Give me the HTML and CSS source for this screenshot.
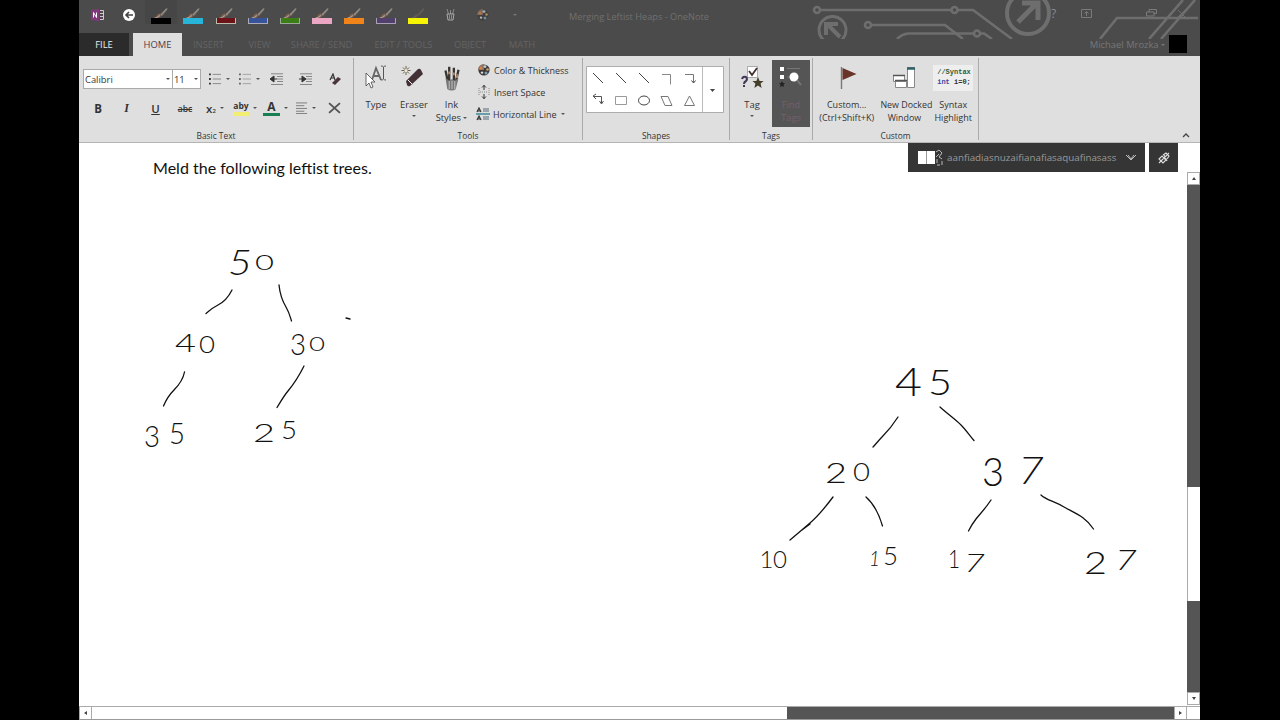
FILE: index.html
```html
<!DOCTYPE html>
<html lang="en">
<head>
<meta charset="UTF-8">
<title>Merging Leftist Heaps - OneNote</title>
<link rel="stylesheet" href="styles.css">
</head>
<body>
<svg class="defs" width="0" height="0">
  <symbol id="brush" viewBox="0 0 18 12">
    <path d="M15 0 L8 7 L10 9 L16 2Z" fill="#77736f"/>
    <path d="M15.5 .5 L9 7.5" stroke="#a39a92" fill="none"/>
    <path d="M8 6 Q5 6 4 9 Q3 11 1 11 Q7 12 9 9Z" fill="#8b6450"/>
    <path d="M2 11 Q5 11 8 8" stroke="#bbb" fill="none" stroke-width=".8"/>
  </symbol>
  <symbol id="cup" viewBox="0 0 20 28">
    <path d="M3 6l3 14M7 2v16M12 3v16M17 5l-3 14" stroke="#383532" stroke-width="2.5" fill="none"/>
    <path d="M7 7v3M12 8v3M16 10l-1 4" stroke="#b08a6c" stroke-width="2"/>
    <path d="M3 14l2 12q5 3 9 0l3-12-4 3-3-2-3 2z" fill="#777"/>
    <path d="M7 17v9M10 17v9M13 17v9" stroke="#ddd" stroke-width=".8"/>
  </symbol>
  <symbol id="palette" viewBox="0 0 12 12">
    <circle cx="6" cy="6" r="5.6" fill="#3d3937"/>
    <path d="M6 0v6H0a6 6 0 0 1 6-6z" fill="#8b7167"/>
    <circle cx="3" cy="4" r="1.5" fill="#d9853b"/><circle cx="7" cy="2.6" r="1.4" fill="#c2cfd4"/>
    <circle cx="9.5" cy="5.5" r="1.3" fill="#cda069"/><circle cx="8" cy="9" r="1.5" fill="#79a4bc"/>
    <circle cx="4" cy="8.6" r="1.2" fill="#ddd"/>
  </symbol>
  <symbol id="bullets" viewBox="0 0 13 13">
    <path d="M0 1.5h2M0 6.5h2M0 11.5h2" stroke="#333" stroke-width="2"/>
    <path d="M4 1.5h9M4 6.5h9M4 11.5h9" stroke="#858585"/>
  </symbol>
  <symbol id="lines" viewBox="0 0 13 13">
    <path d="M0 1h12M0 4h9M0 7h12M0 10h9M0 12.5h12" stroke="#777"/>
  </symbol>
  <symbol id="outdent" viewBox="0 0 13 13">
    <path d="M1 .8h12M7 3.5h6M7 6h6M7 8.5h6M1 11.5h12" stroke="#888"/>
    <path d="M4 3v6L0 6zM4 6h3" fill="#333" stroke="#333"/>
  </symbol>
  <symbol id="indent" viewBox="0 0 13 13">
    <path d="M1 .8h12M7 3.5h6M7 6h6M7 8.5h6M1 11.5h12" stroke="#888"/>
    <path d="M3 3v6l4-3zM0 6h3" fill="#333" stroke="#333"/>
  </symbol>
</svg>

<div class="app">
  <header class="titlebar">
    <svg class="circuit" viewBox="812 0 388 39" width="388" height="39">
      <g fill="none" stroke="#6e6e6e" stroke-width="2.6">
        <circle cx="817" cy="10" r="3"/><path d="M820 10h131"/>
        <circle cx="954.500" cy="10" r="3"/><path d="M958 10h15l39 29"/>
        <circle cx="868" cy="25" r="3"/><path d="M871 25h74l18 14"/>
        <path d="M897 39q5-5 11-5.500h66"/><circle cx="977" cy="33.500" r="3"/><path d="M980 33.500h4l8 5.500"/>
        <path d="M1100 39l17-21h81M1149 39l34-39M1161 39l34-39"/>
        <circle cx="832.500" cy="30" r="13.500" stroke-width="3"/>
        <path d="M840 37l-12-12M826 35v-11h12" stroke-width="4"/>
        <circle cx="1028" cy="13" r="21" stroke-width="4"/>
        <path d="M1018 22l18-18M1022 3h16v17" stroke-width="5"/>
      </g>
    </svg>
    <div class="quick">
      <span><svg width="13" height="12" viewBox="0 0 13 12"><path fill="#80397b" d="M0 1l8-1v12l-8-1z"/><path d="M9 1.500h3.500v9H9M9 4.500h3M9 7.500h3" fill="none" stroke="#d8c3d6"/><path d="M2.500 8.500v-5l3 5v-5" fill="none" stroke="#fff"/></svg></span>
      <span><svg width="12" height="12" viewBox="0 0 12 12"><circle cx="6" cy="6" r="6" fill="#fff"/><path d="M10 6H3M6 3L3 6l3 3" fill="none" stroke="#444" stroke-width="1.600"/></svg></span>
      <span class="pen black on"><svg width="18" height="11"><use href="#brush"/></svg></span>
      <span class="pen cyan"><svg width="18" height="11"><use href="#brush"/></svg></span>
      <span class="pen red"><svg width="18" height="11"><use href="#brush"/></svg></span>
      <span class="pen blue"><svg width="18" height="11"><use href="#brush"/></svg></span>
      <span class="pen green"><svg width="18" height="11"><use href="#brush"/></svg></span>
      <span class="pen pink"><svg width="18" height="11"><use href="#brush"/></svg></span>
      <span class="pen orange"><svg width="18" height="11"><use href="#brush"/></svg></span>
      <span class="pen purple"><svg width="18" height="11"><use href="#brush"/></svg></span>
      <span class="pen yellow"><svg width="18" height="11" opacity=".3"><use href="#brush"/></svg></span>
      <span><svg width="11" height="13" viewBox="0 0 11 13"><path d="M2 1l1.500 5M5.500 2v4M9 1L7.500 6" stroke="#8a8a8a" fill="none"/><path d="M2 6h7l-1 6H3z" fill="none" stroke="#aaa"/><path d="M4.500 7v4M6.500 7v4" stroke="#888"/></svg></span>
      <span class="dim"><svg width="12" height="12"><use href="#palette"/></svg></span>
      <span><i class="caret faint"></i></span>
    </div>
    <div class="title">Merging Leftist Heaps - OneNote</div>
    <div class="winbtns">
      <span>?</span>
      <svg class="opts" width="11" height="9" viewBox="0 0 11 9"><path d="M.5.500h10v8H.500zM5.500 7V3M3.500 4.500l2-2 2 2" fill="none" stroke="#7a7a7a"/></svg>
      <svg class="restore" width="11" height="9" viewBox="0 0 11 9"><path d="M3 3V.500h7.500v4H8M.500 3H8v4H.500z" fill="none" stroke="#7a7a7a"/></svg>
      <svg width="9" height="9" viewBox="0 0 9 9"><path d="M1 1l7 7M8 1L1 8" stroke="#707070"/></svg>
    </div>
  </header>

  <nav class="tabs">
    <span class="file">FILE</span>
    <span class="home">HOME</span>
    <span class="t-insert">INSERT</span>
    <span class="t-view">VIEW</span>
    <span class="t-share">SHARE / SEND</span>
    <span class="t-edit">EDIT / TOOLS</span>
    <span class="t-object">OBJECT</span>
    <span class="t-math">MATH</span>
    <span class="user">Michael Mrozka <i class="caret"></i></span>
    <span class="avatar"></span>
  </nav>

  <section class="ribbon">
    <div class="group basic">
      <div class="body">
        <div class="fontrow">
          <span class="box face">Calibri<i class="caret"></i></span>
          <span class="box size">11<i class="caret"></i></span>
          <span class="tool b1"><svg width="12" height="12"><use href="#bullets"/></svg><i class="caret"></i></span>
          <span class="tool b2"><svg width="12" height="12" opacity=".7"><use href="#bullets"/></svg><i class="caret"></i></span>
          <span class="tool b3"><svg width="13" height="13"><use href="#outdent"/></svg></span>
          <span class="tool b4"><svg width="13" height="13"><use href="#indent"/></svg></span>
          <span class="tool b5"><svg width="12" height="12" viewBox="0 0 12 12"><path d="M1 7l3-6 2 6M2 5h3" stroke="#333" fill="none" stroke-width="1.200"/><path d="M3 10l6-6 3 2-6 6z" fill="#49343a"/></svg></span>
        </div>
        <div class="stylerow">
          <span class="bold">B</span>
          <span class="ital">I</span>
          <span class="undl">U</span>
          <span class="strk">abc</span>
          <span class="sub">x<sub>2</sub><i class="caret"></i></span>
          <span class="hl"><b>aby</b><i class="caret"></i></span>
          <span class="fc"><b>A</b><i class="caret"></i></span>
          <span><svg width="12" height="12"><use href="#lines"/></svg><i class="caret"></i></span>
          <span class="del"><svg width="13" height="12" viewBox="0 0 12 11"><path d="M1 1l10 9M11 1L1 10" stroke="#555" stroke-width="1.800"/></svg></span>
        </div>
      </div>
      <div class="label">Basic Text</div>
    </div>

    <div class="group tools">
      <div class="body">
        <div class="big type">
          <svg width="24" height="26" viewBox="0 0 24 26"><path d="M8 15l4-12 5 12M9.500 11h6" fill="none" stroke="#666" stroke-width="1.800"/><path d="M17 1q2 0 2.500 1Q20 1 22 1M19.500 2v12M17 15q2 0 2.500-1 .5 1 2.500 1" fill="none" stroke="#555"/><path d="M2 8v13l3-3 2 5 2-1-2-5h4z" fill="#fff" stroke="#444" stroke-width=".8"/></svg>
          Type
        </div>
        <div class="big eraser">
          <svg width="28" height="26" viewBox="0 0 28 26"><path d="M6 1v9M1.500 5.500h9M3 2.500l6 6M9 2.500l-6 6" stroke="#6b6250"/><circle cx="6" cy="5.500" r="1.500" fill="#f3efdc"/><path d="M6 16L18 4q2-1 3 1l2 4-13 12q-2 1-3-1z" fill="#433136"/><path d="M8 15l4 4" stroke="#eee"/></svg>
          <span>Eraser</span><i class="caret"></i>
        </div>
        <div class="big ink">
          <svg width="20" height="26"><use href="#cup"/></svg>
          Ink<br>Styles <i class="caret"></i>
        </div>
        <div class="list">
          <div><svg width="12" height="12"><use href="#palette"/></svg>Color &amp; Thickness</div>
          <div><svg width="12" height="14" viewBox="0 0 12 14"><path d="M6 0v5M4 2.500L6 .500l2 2M6 14V9M4 11.500l2 2 2-2" fill="none" stroke="#333"/><path d="M1 3v8M11 3v8M2 7h8" stroke="#888" stroke-dasharray="1 1"/></svg>Insert Space</div>
          <div class="hline"><svg width="14" height="14" viewBox="0 0 14 14"><path d="M1 5l2-4 2 4M1.500 4h3M1 13l2-4 2 4M1.500 12h3" fill="none" stroke="#333" stroke-width="1.200"/><path d="M0 7h14" stroke="#1f7a8c" stroke-width="1.300"/><path d="M7 2h6M7 4h6M7 10h6M7 12h6" stroke="#5a6a78"/></svg>Horizontal Line <i class="caret"></i></div>
        </div>
      </div>
      <div class="label">Tools</div>
    </div>

    <div class="group shapes">
      <div class="body">
        <svg width="138" height="47" viewBox="0 0 138 47">
          <path d="M.5.500h137v46H.500z" fill="#fff" stroke="#adadad"/><path d="M116.500 1v45" stroke="#bbb"/>
          <g fill="none" stroke="#444">
            <path d="M7 7l10 10M30 7l10 10M53 7l10 10"/>
            <path d="M76 8.500h8.500v10" stroke="#888"/><path d="M99 8.500h8.500v8" stroke="#777"/><path d="M105.500 14.500l2 2.500 2-2.500"/>
            <path d="M10 28l-3 2 3 3M7 30.500h8.500v7M13.500 35l2 3 2-3" stroke="#555"/>
            <path d="M29.500 30.500h11v8h-11z" stroke="#999"/><ellipse cx="58" cy="34.500" rx="5.500" ry="4.500"/>
            <path d="M75 30.500h7l4 9h-7z" stroke="#777"/><path d="M103.500 30l5 9.500h-10z" stroke="#777"/>
          </g>
          <path d="M124 23h5l-2.500 3z" fill="#444"/>
        </svg>
      </div>
      <div class="label">Shapes</div>
    </div>

    <div class="group tags">
      <div class="body">
        <div class="big tag">
          <svg width="24" height="26" viewBox="0 0 24 26"><path d="M7.500 1.500h10v11h-10z" fill="#fff" stroke="#aaa"/><path d="M9 6l3 4 5-7" fill="none" stroke="#442c2c" stroke-width="1.800"/><path d="M2 14q1-3 4-2 2 2 0 4-2 1-2 3M4 20v2" fill="none" stroke="#46375a" stroke-width="2"/><path d="M18 12l1.600 4h4l-3 2.600 1 4.400-3.600-2.500L14.400 23l1-4.400-3-2.600h4z" fill="#443f28"/></svg>
          Tag<i class="caret"></i>
        </div>
        <div class="big find">
          <svg width="28" height="26" viewBox="0 0 28 26"><path d="M3 2h4v4H3zM3 10h4v4H3z" fill="#fff"/><path d="M10 3.500h13M10 12h5" stroke="#777"/><path d="M5 16l1 2h2l-1.500 1.500.5 2.500-2-1-2 1 .5-2.500L2 18h2z" fill="#222"/><circle cx="17" cy="12" r="4.500" fill="#fff"/><path d="M20 15l4 5" stroke="#777" stroke-width="2"/></svg>
          Find<br>Tags
        </div>
      </div>
      <div class="label">Tags</div>
    </div>

    <div class="group custom">
      <div class="body">
        <div class="big c1">
          <svg width="24" height="26" viewBox="0 0 24 26"><path d="M6.500 2v22" stroke="#777" stroke-width="1.400"/><path d="M7.500 3l14 6-14 6z" fill="#6a3329"/></svg>
          Custom...<br>(Ctrl+Shift+K)
        </div>
        <div class="big c2">
          <svg width="24" height="26" viewBox="0 0 24 26"><path d="M1.500 10.500h11v6h-11zM3.500 16.500h11v6h-11z" fill="#fff" stroke="#888"/><path d="M1 10.500h12M3 15.500h12" stroke="#555" stroke-width="1.500"/><path d="M15.500 2.500h7v20h-7z" fill="#fff" stroke="#888"/><path d="M15 3.500h8" stroke="#2f6268" stroke-width="2.500"/></svg>
          New Docked<br>Window
        </div>
        <div class="big c3">
          <div class="code"><em>//Syntax</em><br><b>int</b> i=0;</div>
          Syntax<br>Highlight
        </div>
      </div>
      <div class="label">Custom</div>
    </div>
    <svg class="collapse" width="8" height="5" viewBox="0 0 8 5"><path d="M1 4l3-3 3 3" fill="none" stroke="#444" stroke-width="1.300"/></svg>
  </section>

  <main class="page">
    <div class="sheet">
      <p class="note">Meld the following leftist trees.</p>
      <svg class="ink-layer" viewBox="79 143 1108 563" width="1108" height="563">
        <g class="strokes">
          <path d="M232 290C228 298 224 302 218 305S209 311 206 313.500"/>
          <path d="M279 285C280 295 283 302 286 307S290 316 291.500 321"/>
          <path d="M184.500 372C183 380 179 385 174 390S166 400 163.500 406"/>
          <path d="M304 366C298 378 293 385 288 391S280 403 277 407.500"/>
          <path d="M346 318l4 1"/>
          <path d="M898 417C891 428 886 433 882 437S876 444 873 447"/>
          <path d="M940 407C949 415 956 420 961 425S970 436 974 440.500"/>
          <path d="M833 497C824 509 817 517 810 523S796 535 790 540M810 524l-8 6"/>
          <path d="M866 497C874 504 879 514 882.500 526"/>
          <path d="M991 500C985 509 980 514 976 519S970 528 968.500 531"/>
          <path d="M1041 495C1046 500 1054 501 1064 507S1085 516 1093.500 529"/>
        </g>
        <g class="digits">
          <text class="lean" x="228" y="275" font-size="35" textLength="24" lengthAdjust="spacingAndGlyphs">5</text>
          <text x="255" y="270" font-size="22" textLength="19" lengthAdjust="spacingAndGlyphs">0</text>
          <text x="175" y="352" font-size="25" textLength="21" lengthAdjust="spacingAndGlyphs">4</text>
          <text x="199" y="353" font-size="23" textLength="16" lengthAdjust="spacingAndGlyphs">0</text>
          <text x="290" y="355" font-size="29" textLength="16" lengthAdjust="spacingAndGlyphs">3</text>
          <text x="309" y="351" font-size="20" textLength="16" lengthAdjust="spacingAndGlyphs">0</text>
          <text x="144" y="447" font-size="30" textLength="16" lengthAdjust="spacingAndGlyphs">3</text>
          <text x="169" y="444" font-size="30" textLength="16" lengthAdjust="spacingAndGlyphs">5</text>
          <text x="253" y="442" font-size="26" textLength="22" lengthAdjust="spacingAndGlyphs">2</text>
          <text x="281" y="439" font-size="25" textLength="16" lengthAdjust="spacingAndGlyphs">5</text>
          <text x="895" y="396" font-size="39" textLength="27" lengthAdjust="spacingAndGlyphs">4</text>
          <text x="928" y="395" font-size="36" textLength="24" lengthAdjust="spacingAndGlyphs">5</text>
          <text x="825" y="483" font-size="27" textLength="22" lengthAdjust="spacingAndGlyphs">2</text>
          <text x="853" y="481" font-size="25" textLength="17" lengthAdjust="spacingAndGlyphs">0</text>
          <text x="982" y="486" font-size="40" textLength="22" lengthAdjust="spacingAndGlyphs">3</text>
          <text class="lean" x="1018" y="484" font-size="37" textLength="26" lengthAdjust="spacingAndGlyphs">7</text>
          <text x="759.500 773" y="568" font-size="24">10</text>
          <text class="lean" x="869" y="566" font-size="22" textLength="11" lengthAdjust="spacingAndGlyphs">1</text>
          <text x="883" y="565" font-size="25" textLength="15" lengthAdjust="spacingAndGlyphs">5</text>
          <text x="948" y="568" font-size="25" textLength="12" lengthAdjust="spacingAndGlyphs">1</text>
          <text class="lean" x="964" y="572" font-size="25" textLength="21" lengthAdjust="spacingAndGlyphs">7</text>
          <text x="1084" y="574" font-size="31" textLength="23" lengthAdjust="spacingAndGlyphs">2</text>
          <text class="lean" x="1115" y="570" font-size="28" textLength="22" lengthAdjust="spacingAndGlyphs">7</text>
        </g>
      </svg>
    </div>
    <div class="vscroll">
      <span class="btn"><i class="up"></i></span>
      <span class="track"><span class="thumb"></span></span>
      <span class="btn"><i class="down"></i></span>
    </div>
    <div class="floatbar">
      <span class="main">
        <svg width="26" height="17" viewBox="0 0 26 17"><path d="M1 2h17v13H1z" fill="#fff"/><path d="M9.500 2v13" stroke="#999"/><path d="M19 3l3-2 3 3-3 4 3 2M19 8l3-3M20 10v4M25 12v4M20 16h3" fill="none" stroke="#bbb"/></svg>
        <span class="hint">aanfiadiasnuzaifianafiasaquafinasass</span>
        <svg width="12" height="8" viewBox="0 0 12 8"><path d="M1 1l5 5 5-5M3 1l3 4 3-4" fill="none" stroke="#bbb"/></svg>
      </span>
      <span class="pin"><svg width="12" height="12" viewBox="0 0 12 12"><path d="M1 7l3-3 4 4-3 3zM5 3l3-2 3 3-2 3M1 11l10-10M6 3l3 6" fill="none" stroke="#ddd" stroke-width="1.100"/></svg></span>
    </div>
  </main>

  <footer class="hscroll">
    <span class="btn"><i class="left"></i></span>
    <span class="thumb"></span>
    <span class="track"></span>
    <span class="btn"><i class="right"></i></span>
    <span class="corner"></span>
  </footer>
</div>
</body>
</html>
```
FILE: styles.css
```css
* {
  box-sizing: border-box;
}
body {
  margin: 0;
  background: #000;
  font: 9.4px/13px "Open Sans", "Noto Sans", sans-serif;
  color: #333;
}
svg {
  display: block;
  flex: none;
}
.defs {
  position: absolute;
}
.app {
  position: relative;
  width: 1121px;
  height: 720px;
  margin-left: 79px;
  display: flex;
  flex-direction: column;
  background: #fff;
  overflow: hidden;
}
.caret {
  display: inline-block;
  border: 2px solid transparent;
  border-top: 2.5px solid #555;
  border-bottom: 0;
  flex: none;
}
.caret.faint {
  border-top-color: #777;
}

/* title bar */
.titlebar {
  height: 33px;
  background: #4b4b4b;
  display: flex;
  flex: none;
}
.circuit {
  position: absolute;
  right: 0;
  top: 0;
  z-index: 1;
}
.quick {
  display: flex;
  width: 452px;
  padding-left: 2px;
}
.quick > span {
  width: 32.2px;
  height: 29px;
  display: flex;
  align-items: center;
  justify-content: center;
}
.quick .pen {
  flex-direction: column;
  height: 24px;
  padding-top: 8px;
  justify-content: flex-start;
}
.quick .pen::after {
  content: "";
  width: 18px;
  height: 5px;
  flex: none;
  margin-top: -1px;
  background: var(--ink);
  border: 1px solid var(--edge, var(--ink));
  border-top: 0;
}
.quick .on {
  background: #464646;
}
.black { --ink: #000; }
.cyan { --ink: #27b4d8; }
.red { --ink: #6e1219; --edge: #bba; }
.blue { --ink: #37549a; --edge: #aab; }
.green { --ink: #3c7d16; --edge: #9a9; }
.pink { --ink: #eba6c4; }
.orange { --ink: #f08418; }
.purple { --ink: #50406b; --edge: #a9a0b8; }
.yellow { --ink: #f6f303; }
.dim {
  opacity: .75;
}
.title {
  width: 216px;
  text-align: center;
  line-height: 33px;
  color: #707070;
  font-size: 9.2px;
}
.winbtns {
  position: absolute;
  right: 14px;
  top: 6px;
  width: 135px;
  display: flex;
  align-items: center;
  line-height: 15px;
  color: #8a8a8a;
  font-size: 12px;
}
.winbtns .opts {
  margin: 0 54px 0 25px;
}
.winbtns .restore {
  margin-right: auto;
}

/* tabs */
.tabs {
  height: 23px;
  background: #4b4b4b;
  display: flex;
  flex: none;
  line-height: 23px;
  text-align: center;
  color: #636363;
}
.tabs span {
  white-space: nowrap;
}
.tabs .file {
  width: 50px;
  background: #2b2b2b;
  color: #eee;
}
.tabs .home {
  width: 49px;
  margin-left: 4px;
  background: #dfdfdf;
  color: #4d3a4a;
}
.t-insert { width: 53px; }
.t-view { width: 49px; }
.t-share { width: 75px; }
.t-edit { width: 89px; }
.t-object { width: 44px; }
.t-math { width: 60px; }
.tabs .user {
  margin-left: auto;
  color: #777;
}
.tabs .user .caret {
  border-top-color: #777;
  vertical-align: middle;
}
.tabs .avatar {
  width: 18px;
  height: 18px;
  margin: 2px 13px 0 4px;
  background: #000;
}

/* ribbon */
.ribbon {
  height: 87px;
  display: flex;
  flex: none;
  background: #dfdfdf;
  border-bottom: 1px solid #b5b5b5;
  position: relative;
}
.group {
  display: flex;
  flex-direction: column;
  margin: 2px 0;
  border-right: 1px solid #aaa;
}
.group .body {
  height: 71px;
  flex: none;
  display: flex;
}
.group .label {
  text-align: center;
  font-size: 8.4px;
  line-height: 13px;
}
.basic { width: 275px; }
.tools { width: 229px; }
.shapes { width: 147px; }
.tags { width: 83px; }
.custom { width: 166px; }

.basic .body {
  flex-direction: column;
}
.fontrow {
  display: flex;
  height: 20px;
  margin: 11px 0 0 4px;
}
.box {
  display: flex;
  align-items: center;
  justify-content: space-between;
  height: 20px;
  padding: 0 2px 0 1px;
  background: #fff;
  border: 1px solid #aaa;
}
.face {
  width: 90px;
}
.size {
  width: 29px;
  margin-left: -1px;
}
.tool {
  display: flex;
  align-items: center;
  gap: 5px;
}
.b1 { margin-left: 8px; }
.b2 { margin-left: 9px; }
.b3 { margin-left: 10px; }
.b4 { margin-left: 16px; }
.b5 { margin-left: 17px; }
.stylerow {
  display: grid;
  grid-template-columns: 28px 29px 29px 30px 30px 30px 31px 29px 26px;
  margin: 9px 0 0 5px;
  height: 20px;
  font-size: 11.5px;
}
.stylerow span {
  display: flex;
  align-items: center;
  justify-content: center;
  gap: 4px;
}
.stylerow .del {
  padding-left: 2px;
}
.bold {
  font-weight: bold;
}
.ital {
  font: italic bold 12px "Liberation Serif", serif;
}
.undl {
  text-decoration: underline;
  font-weight: 600;
}
.strk {
  text-decoration: line-through;
  font-size: 8.5px;
  font-weight: 600;
}
.sub {
  font-weight: 600;
}
.sub sub {
  font-size: 6px;
  margin: 7px 0 0 -4px;
}
.hl b {
  font-size: 8.5px;
  line-height: 12px;
  border-bottom: 4px solid #f1ee73;
}
.fc b {
  font-size: 12px;
  line-height: 12px;
  padding: 0 4px;
  border-bottom: 3px solid #178052;
}

.big {
  padding-top: 7px;
  text-align: center;
  white-space: nowrap;
}
.big svg {
  margin: 0 auto 7px;
}
.big .caret {
  vertical-align: middle;
}
.type { width: 44px; }
.eraser { width: 32px; }
.eraser span {
  display: block;
}
.eraser svg {
  margin: 0 0 7px 2px;
}
.eraser .caret {
  display: block;
  width: 4px;
  margin: 4px auto 0;
}
.ink { width: 43px; }
.list {
  padding-top: 1px;
  font-size: 9px;
}
.list div {
  display: flex;
  align-items: center;
  height: 22px;
  gap: 4px;
  padding-left: 5px;
  white-space: nowrap;
}
.list .hline {
  padding-left: 3px;
  gap: 3px;
}
.list .caret {
  margin-left: 1px;
}
.shapes .body {
  padding: 8px 0 0 3px;
}
.tag {
  width: 42px;
  padding-left: 2px;
}
.tag .caret {
  display: block;
  width: 4px;
  margin: 4px auto 0;
}
.find {
  width: 38px;
  height: 67px;
  margin-top: 2px;
  padding-top: 5px;
  background: #555;
  color: #745f6c;
}
.c1 { width: 68px; font-size: 9px; }
.c2 { width: 48px; font-size: 8.9px; }
.c3 { width: 50px; font-size: 9px; }
.code {
  width: 40px;
  height: 26px;
  margin: 0 auto 7px;
  padding: 2px 0 0 4px;
  background: #eee;
  font: bold 7px/10px "Liberation Mono", monospace;
  text-align: left;
}
.code em {
  font-style: normal;
  color: #315b35;
}
.code b {
  color: #3b4ba0;
}
.collapse {
  position: absolute;
  right: 10px;
  bottom: 4px;
}

/* page */
.page {
  height: 563px;
  display: flex;
  flex: none;
  position: relative;
}
.sheet {
  width: 1108px;
  position: relative;
}
.note {
  margin: 14px 0 0 74px;
  font: 16.05px/22px Lato, "Open Sans", sans-serif;
  color: #111;
}
.ink-layer {
  position: absolute;
  left: 0;
  top: 0;
}
.strokes {
  fill: none;
  stroke: #111;
  stroke-width: 1.3;
  stroke-linecap: round;
}
.digits {
  font-family: Lato, sans-serif;
  font-weight: 300;
  fill: #111;
}
.digits .lean {
  font-style: italic;
}
.vscroll {
  width: 13px;
  margin-top: 29px;
  height: 534px;
  display: flex;
  flex-direction: column;
}
.btn {
  width: 13px;
  height: 13px;
  flex: none;
  background: #fff;
  border: 1px solid #aaa;
  display: flex;
  align-items: center;
  justify-content: center;
}
.btn i {
  border: 2.5px solid transparent;
}
.btn .up { border-bottom: 3px solid #444; border-top: 0; }
.btn .down { border-top: 3px solid #444; border-bottom: 0; }
.btn .left { border-right: 3px solid #444; border-left: 0; }
.btn .right { border-left: 3px solid #444; border-right: 0; }
.vscroll .track {
  height: 507px;
  background: #555;
  padding-top: 302px;
}
.vscroll .thumb {
  display: block;
  height: 114px;
  background: #fff;
  border-left: 1px solid #aaa;
}
.floatbar {
  position: absolute;
  left: 829px;
  top: 0;
  height: 29px;
  display: flex;
  gap: 4px;
}
.floatbar .main,
.floatbar .pin {
  display: flex;
  align-items: center;
  background: #353535;
}
.floatbar .main {
  width: 237px;
  padding: 0 8px 0 9px;
}
.floatbar .pin {
  width: 29px;
  justify-content: center;
}
.hint {
  width: 172px;
  margin: 0 8px 0 4px;
  overflow: hidden;
  color: #9a9a9a;
  font-size: 9.8px;
  white-space: nowrap;
}

/* bottom scrollbar */
.hscroll {
  display: flex;
  height: 14px;
  border-top: 1px solid #aaa;
  border-bottom: 1px solid #999;
}
.hscroll .btn {
  height: 12px;
  border-top: 0;
  border-bottom: 0;
}
.hscroll .thumb {
  width: 695px;
  background: #fff;
}
.hscroll .track {
  width: 387px;
  background: #555;
}
.hscroll .corner {
  width: 13px;
}
```
